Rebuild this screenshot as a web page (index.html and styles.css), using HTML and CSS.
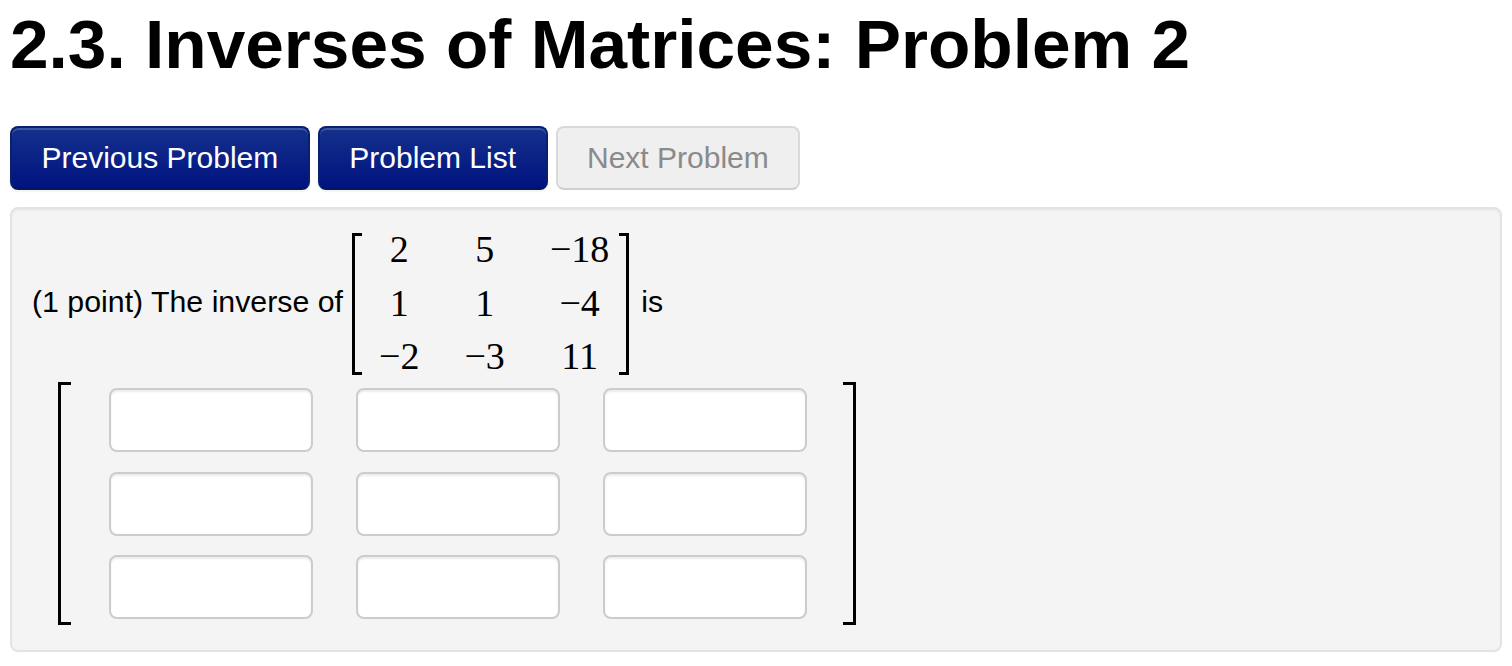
FILE: index.html
```
<!DOCTYPE html>
<html lang="en">
<head>
<meta charset="utf-8">
<title>2.3. Inverses of Matrices: Problem 2</title>
<link rel="stylesheet" href="styles.css">
</head>
<body>
<div class="page">
  <h1 class="title">2.3. Inverses of Matrices: Problem 2</h1>
  <div class="nav">
    <a class="btn btn-primary">Previous Problem</a>
    <a class="btn btn-primary">Problem List</a>
    <a class="btn btn-disabled">Next Problem</a>
  </div>
  <div class="well">
    <div class="question">
      <span class="qtext">(1 point) The inverse of</span>
      <span class="qmatrix">
        <span class="bracket left"></span>
        <span class="cells">
          <span>2</span><span>5</span><span>&minus;18</span>
          <span>1</span><span>1</span><span>&minus;4</span>
          <span>&minus;2</span><span>&minus;3</span><span>11</span>
        </span>
        <span class="bracket right"></span>
      </span>
      <span class="qtext">is</span>
    </div>
    <div class="answer">
      <span class="abracket left"></span>
      <div class="inputs">
        <input class="ans" type="text"><input class="ans" type="text"><input class="ans" type="text">
        <input class="ans" type="text"><input class="ans" type="text"><input class="ans" type="text">
        <input class="ans" type="text"><input class="ans" type="text"><input class="ans" type="text">
      </div>
      <span class="abracket right"></span>
    </div>
  </div>
</div>
</body>
</html>
```
FILE: styles.css
```
html, body {
  margin: 0;
  padding: 0;
  background: #ffffff;
}

body {
  font-family: "Liberation Sans", Arial, Helvetica, sans-serif;
  color: #000;
}

.page {
  padding: 5px 10px 0 10px;
}

.title {
  margin: 0;
  font-size: 69.4px;
  line-height: 78px;
  font-weight: bold;
  letter-spacing: 0;
}

.nav {
  display: flex;
  gap: 8px;
  margin-top: 43px;
}

.btn {
  display: inline-block;
  box-sizing: border-box;
  height: 64px;
  padding: 0 29.5px;
  font-size: 30px;
  line-height: 60px;
  border-radius: 8px;
  border: 2px solid;
  cursor: pointer;
}

.btn-primary {
  color: #ffffff;
  background: linear-gradient(#14318c, #00127f);
  border-color: #0a1f6e #0a1f6e #051660;
  box-shadow: inset 0 2px 0 rgba(255, 255, 255, 0.18), 0 2px 2px rgba(0, 0, 0, 0.05);
}

.btn-disabled {
  color: #8a8a8a;
  background: #efefef;
  border-color: #d9d9d9 #d9d9d9 #cfcfcf;
}

.well {
  margin-top: 17px;
  background: #f4f4f4;
  border: 2px solid #e3e3e3;
  border-radius: 8px;
  padding: 24px 20px 25px 20px;
  box-shadow: inset 0 2px 2px rgba(0, 0, 0, 0.04);
}

.question {
  display: flex;
  align-items: center;
}

.qtext {
  font-size: 30.3px;
  line-height: 34px;
  margin-bottom: 4px;
}

.qmatrix {
  display: flex;
  align-items: stretch;
  margin: 0 12px 0 9px;
  font-family: "Liberation Serif", "Times New Roman", serif;
  font-size: 38px;
}

.bracket {
  width: 7px;
  border: 3px solid #000;
}

.bracket.left {
  border-right: none;
}

.bracket.right {
  border-left: none;
}

.cells {
  display: grid;
  grid-template-columns: auto auto auto;
  column-gap: 45px;
  row-gap: 21.5px;
  justify-items: center;
  line-height: 32px;
  padding: 0 10px 3px 17px;
}

.answer {
  display: flex;
  align-items: stretch;
  margin-top: 7px;
  margin-left: 26px;
}

.abracket {
  width: 10px;
  border: 3px solid #000;
}

.abracket.left {
  border-right: none;
  margin-right: 38px;
}

.abracket.right {
  border-left: none;
  margin-left: 36px;
}

.inputs {
  display: grid;
  grid-template-columns: 204px 204px 204px;
  column-gap: 43px;
  row-gap: 19.5px;
  padding: 6px 0;
}

.ans {
  box-sizing: border-box;
  width: 204px;
  height: 64px;
  margin: 0;
  background: #ffffff;
  border: 2px solid #cccccc;
  border-radius: 8px;
  box-shadow: inset 0 2px 2px rgba(0, 0, 0, 0.075);
  font-size: 28px;
  padding: 0 10px;
}
```
